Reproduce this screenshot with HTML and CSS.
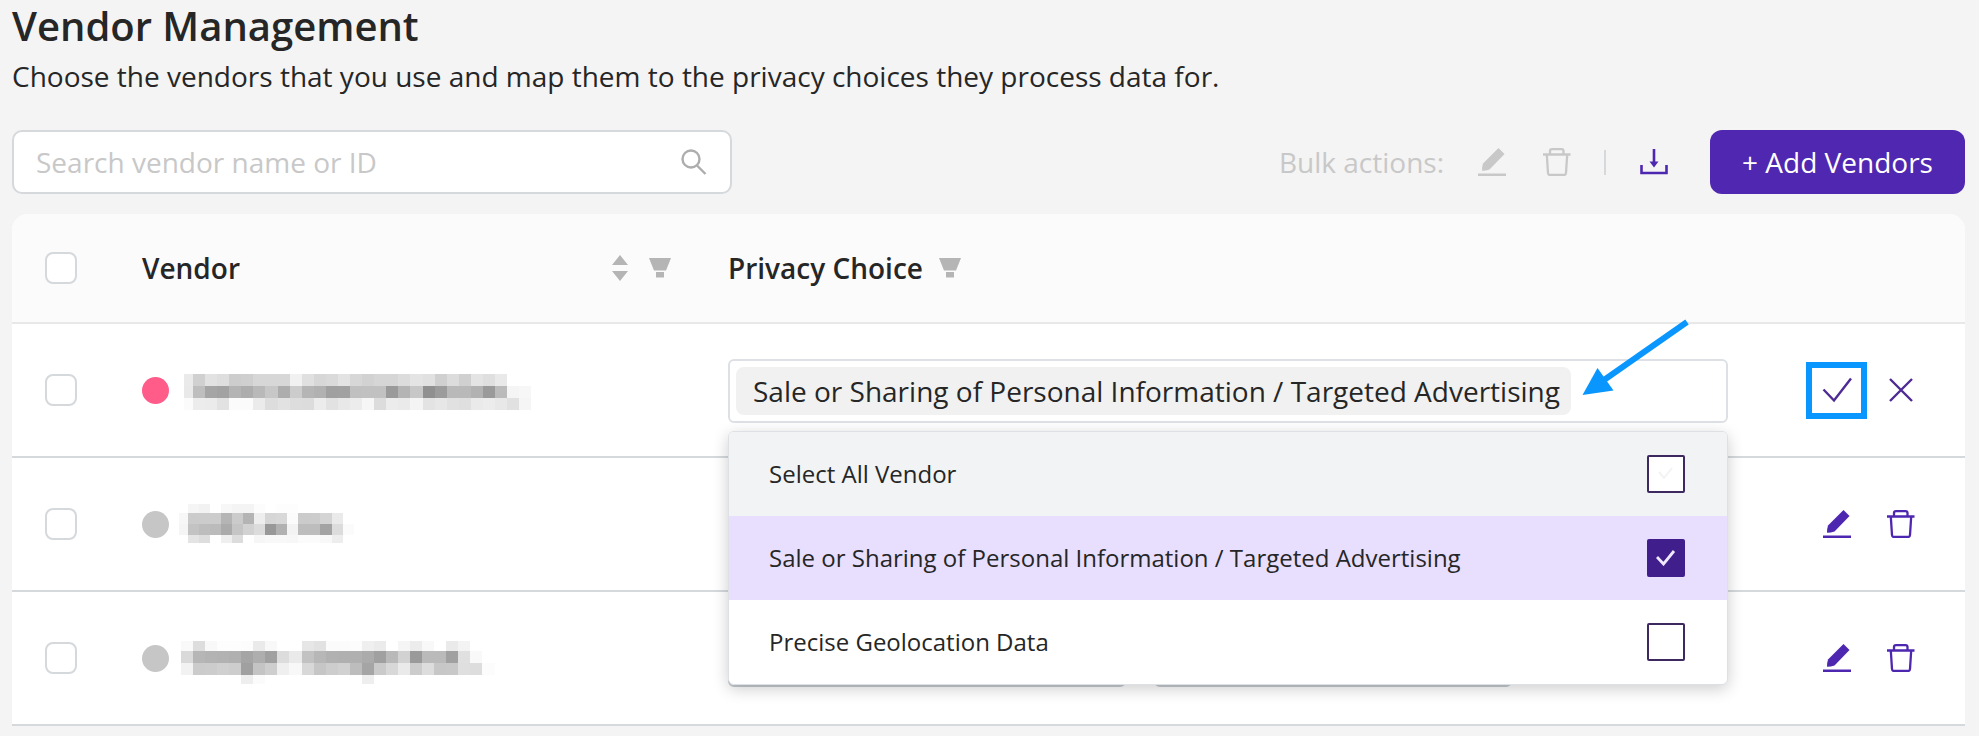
FILE: index.html
```html
<!DOCTYPE html>
<html lang="en">
<head>
    <meta charset="UTF-8">
    <meta name="viewport" content="width=device-width, initial-scale=1.0">
    <title>Vendor Management</title>
    <link rel="stylesheet" href="styles.css">
</head>
<body>
    <!-- shared icons -->
    <svg class="sprite">
        <symbol id="pencil" viewBox="0 0 28 28">
            <path d="M20.5 0 L26.500 6 L11.500 21.500 Q8 22.800 4 22.800 Q4 18.500 5 15.500 Z" fill="currentColor"/>
            <path d="M0 26.800 H28" stroke="currentColor" stroke-width="2.600"/>
        </symbol>
        <symbol id="trash" viewBox="0 0 28 28">
            <path d="M0 6.500 H27.500 M7 6.500 V3 Q7 1.200 9 1.200 H18.500 Q20.500 1.200 20.500 3 V6.500 M3.800 6.500 L5 25 Q5.200 27 7 27 H21 Q22.800 27 23 25 L24.200 6.500" fill="none" stroke="currentColor" stroke-width="2.300"/>
        </symbol>
        <symbol id="filter" viewBox="0 0 22 20">
            <path d="M0 0 H22 L17 12.500 H5 Z M7 14 H15 V19.500 H7 Z" fill="currentColor"/>
        </symbol>
    </svg>

    <main class="page">
        <h1 class="title">Vendor Management</h1>
        <p class="subtitle">Choose the vendors that you use and map them to the privacy choices they process data for.</p>

        <div class="toolbar">
            <div class="search">
                <input class="search-input" type="text" placeholder="Search vendor name or ID">
                <svg class="search-icon" width="26" height="26" viewBox="0 0 26 26"><circle cx="10" cy="10" r="8.500"/><path d="M16 16.500 L24.500 25"/></svg>
            </div>
            <div class="bulk">
                <span class="bulk-label">Bulk actions:</span>
                <svg class="icon icon-edit"><use href="#pencil"/></svg>
                <svg class="icon icon-delete"><use href="#trash"/></svg>
                <span class="divider"></span>
                <svg class="icon-download" width="28" height="26" viewBox="0 0 28 26"><path d="M14 0 V14 M1.500 16 V24 H26.500 V16" fill="none" stroke="currentColor" stroke-width="2.600"/><path d="M9.500 12.500 H18.500 L14 18.500 Z" fill="currentColor"/></svg>
            </div>
            <button class="add-btn">+ Add Vendors</button>
        </div>

        <div class="table">
            <div class="row head">
                <span class="check"></span>
                <div class="vendor">
                    <span>Vendor</span>
                    <svg class="sort" width="16" height="26" viewBox="0 0 16 26"><path d="M8 0 L16 10 H0 Z M0 16 H16 L8 26 Z"/></svg>
                    <svg class="filter"><use href="#filter"/></svg>
                </div>
                <div class="choice">
                    <span>Privacy Choice</span>
                    <svg class="filter"><use href="#filter"/></svg>
                </div>
            </div>

            <div class="row">
                <span class="check"></span>
                <div class="vendor"><span class="dot active"></span><svg class="masked" data-name="0"></svg></div>
                <div class="choice">
                    <div class="select">
                        <span class="tag">Sale or Sharing of Personal Information / Targeted Advertising</span>
                        <div class="dropdown">
                            <div class="option all"><span>Select All Vendor</span><span class="box"><svg class="tick" viewBox="0 0 20 16"><path d="M3 6 L8 12 L16 2"/></svg></span></div>
                            <div class="option selected"><span>Sale or Sharing of Personal Information / Targeted Advertising</span><span class="box"><svg class="tick" viewBox="0 0 20 16"><path d="M1 7 L7.500 14 L18 1"/></svg></span></div>
                            <div class="option"><span>Precise Geolocation Data</span><span class="box"></span></div>
                        </div>
                    </div>
                </div>
                <div class="actions editing">
                    <span class="highlight"><svg width="30" height="26" viewBox="0 0 30 26"><path d="M1.500 12.500 L12 23.500 L29 1.500"/></svg></span>
                    <svg class="close" width="24" height="24" viewBox="0 0 24 24"><path d="M1 1 L23 23 M23 1 L1 23"/></svg>
                </div>
            </div>

            <div class="row">
                <span class="check"></span>
                <div class="vendor"><span class="dot"></span><svg class="masked" data-name="1"></svg></div>
                <div class="choice"></div>
                <div class="actions">
                    <svg class="icon"><use href="#pencil"/></svg>
                    <svg class="icon"><use href="#trash"/></svg>
                </div>
            </div>

            <div class="row">
                <span class="check"></span>
                <div class="vendor"><span class="dot"></span><svg class="masked" data-name="2"></svg></div>
                <div class="choice"><span class="pill pill-wide"></span><span class="pill"></span></div>
                <div class="actions">
                    <svg class="icon"><use href="#pencil"/></svg>
                    <svg class="icon"><use href="#trash"/></svg>
                </div>
            </div>
        </div>
    </main>

    <svg class="arrow" width="110" height="80" viewBox="0 0 110 80"><path class="arrow-line" d="M105 3 L22 61"/><path class="arrow-head" d="M0.500 76 L15.500 49 L31.500 71.500 Z"/></svg>

    <script>
        // masked vendor names: x = left offset, w = cell width, ys = row edges, rows = grey levels
        const names = [
            { x: 4, first: 9, w: 12.08, ys: [0, 12, 24, 36], rows: [
                'ea d0 e2 de cd cf d7 d7 d7 f1 e0 d7 da e3 d7 d2 d6 d6 dc e4 e1 d0 dc d0 e4 df e9',
                'e9 be a5 a2 b4 ad b9 c7 ad cc b5 b1 a0 a1 c0 c1 c1 9a b4 c7 90 9c b9 b9 b2 9a bb f5 f7',
                'fb ec eb e2 fb fb eb dd e2 dd dc ec e2 e8 ec f6 dc ec ea f4 e3 e7 e1 df ea ec e8 e1 f5'] },
            { x: -1, first: 9, w: 11.04, ys: [-4, 5, 16, 27, 35], rows: [
                'ff f5 f2 ff f7 f4 f4 fc ff fd fd',
                'f7 cb cc cc b5 cb b4 ee d6 d8 fb cb cc d4 ea',
                'f5 c3 bd bb ab c5 d2 dc 98 b1 f3 bd bd a3 dc fb',
                'ff e4 dd ff ef dc ff f6 f8 f8 f7 fb fb f8 ed'] },
            { x: 1, first: 12, w: 12.06, ys: [-1, 9, 21, 33, 42], rows: [
                'f9 dd f8 fd fd fc ea f8 ff ff e6 e2 fb fb fc ef eb ff f5 ec f8 ff ea f3',
                'd9 b6 b3 b2 b0 a5 ae a0 dc ea c2 b7 b1 b0 b0 ab a0 b9 d2 9a ba ba a0 e0 f9',
                'f2 cb cc d0 cd a0 c4 ce ef f8 d8 c6 cd d1 bd a5 ca d8 ea cc dd c7 c8 df dd fc',
                'ff ff ff ff ff ee fb ff ff ff ff ff ff ff ff ee'] }
        ];

        document.querySelectorAll('.masked').forEach(svg => {
            const n = names[svg.dataset.name];
            n.rows.forEach((row, r) => {
                row.split(' ').forEach((c, i) => {
                    const rect = document.createElementNS('http://www.w3.org/2000/svg', 'rect');
                    rect.setAttribute('x', i ? n.x + n.first + (i - 1) * n.w : n.x);
                    rect.setAttribute('y', n.ys[r] + 6);
                    rect.setAttribute('width', i ? n.w : n.first);
                    rect.setAttribute('height', n.ys[r + 1] - n.ys[r]);
                    rect.setAttribute('fill', '#' + c + c + c);
                    svg.appendChild(rect);
                });
            });
        });
    </script>
</body>
</html>
```
FILE: styles.css
```css
*{padding:0; margin:0; box-sizing:border-box;}

body{
    height:736px;
    overflow:hidden;
    background:#f4f4f4;
    color:#262626;
    font-family:"Open Sans", sans-serif;
    font-size:28px;
}
svg{display:block; flex:none;}
.sprite{position:absolute; width:0; height:0;}

.page{padding:0 14px 0 12px;}
.title{
    font-size:40px;
    font-weight:600;
    line-height:52px;
}
.subtitle{
    height:78px;
    line-height:48px;
}

/* toolbar */
.toolbar{
    display:flex;
    align-items:center;
    height:64px;
    margin-bottom:20px;
}
.search{
    display:flex;
    align-items:center;
    width:720px;
    height:64px;
    padding:0 23px 0 22px;
    background:#fff;
    border:2px solid #d5d9dc;
    border-radius:10px;
}
.search-input{
    flex:1;
    border:0;
    outline:0;
    background:none;
    font:inherit;
    line-height:38px;
}
.search-input::placeholder{color:#c8c8c8;}
.search-icon{fill:none; stroke:#adadad; stroke-width:2.4;}
.bulk{
    display:flex;
    align-items:center;
    margin-left:auto;
    color:#c8c8c8;
}
.bulk-label{margin-right:34px;}
.icon{width:28px; height:28px; overflow:visible;}
.bulk .icon-delete{margin-left:37px;}
.divider{width:2px; height:25px; margin:0 34px 0 33px; background:#d5d9dc;}
.icon-download{color:#4e27b0; margin-right:42px;}
.add-btn{
    width:255px;
    height:64px;
    border:0;
    border-radius:12px;
    background:#5027b0;
    color:#fff;
    font:inherit;
}

/* table */
.table{background:#fff; border-radius:16px 16px 0 0;}
.row{
    display:flex;
    align-items:center;
    height:134px;
    padding-left:33px;
    border-bottom:2px solid #d5d9dc;
}
.row.head{
    height:110px;
    background:#fbfbfb;
    border-bottom-color:#e8e8e8;
    border-radius:16px 16px 0 0;
    font-weight:600;
}
.check{
    width:32px;
    height:32px;
    background:#fff;
    border:2px solid #d5d9dc;
    border-radius:8px;
}
.vendor{
    display:flex;
    align-items:center;
    width:651px;
    padding-left:65px;
}
.dot{width:27px; height:27px; border-radius:50%; background:#c6c6c6;}
.dot.active{background:#ff5c8a;}
.masked{
    width:360px;
    height:44px;
    margin-left:11px;
    overflow:visible;
    shape-rendering:crispEdges;
}
.sort{margin-left:auto; fill:#b5b5b5;}
.filter{width:22px; height:20px; color:#b5b5b5;}
.vendor .filter{margin:0 57px 0 21px;}
.choice{
    display:flex;
    align-items:center;
    width:1000px;
}
.choice .filter{margin-left:16px;}
.pill{width:358px; height:58px; border:2px solid #c5cbd0; border-radius:6px;}
.pill-wide{width:398px; margin-right:28px;}

.select{
    position:relative;
    display:flex;
    align-items:center;
    width:1000px;
    height:64px;
    margin-top:2px;
    padding:0 6px;
    border:2px solid #dde1e5;
    border-radius:6px;
}
.tag{
    width:835px;
    height:48px;
    padding-left:17px;
    border-radius:8px;
    background:#f1f1f1;
    line-height:48px;
    white-space:nowrap;
}
.dropdown{
    position:absolute;
    z-index:1;
    top:70px;
    left:-2px;
    width:1000px;
    border:1px solid #dde1e5;
    border-radius:6px;
    background:#fff;
    box-shadow:0 4px 16px rgba(0,0,0,.2);
    overflow:hidden;
    font-size:24px;
}
.option{
    display:flex;
    align-items:center;
    justify-content:space-between;
    height:84px;
    padding:0 42px 0 40px;
}
.option > span:first-child{margin-top:-2px;}
.option.all{background:#f2f3f5;}
.option.selected{background:#e8dfff;}
.box{
    display:flex;
    align-items:center;
    justify-content:center;
    width:38px;
    height:38px;
    border:2px solid #3d2860;
    border-radius:2px;
    background:#fff;
}
.tick{width:20px; height:16px; fill:none; stroke:#f3f3f3; stroke-width:2;}
.selected .box{background:#401f8c; border-color:#401f8c;}
.selected .tick{stroke:#f0e8ff; stroke-width:2.8;}

.actions{
    display:flex;
    align-items:center;
    gap:36px;
    margin-left:95px;
    color:#4e27b0;
}
.actions.editing{
    gap:23px;
    margin-left:78px;
    fill:none;
    stroke:#4e2a94;
    stroke-width:2.4;
}
.highlight{
    display:flex;
    align-items:center;
    justify-content:center;
    width:61px;
    height:57px;
    border:6px solid #0a96ff;
}
.close{margin-left:-1px;}

/* pointer drawn over the table */
.arrow{position:absolute; left:1582px; top:319px;}
.arrow-line{stroke:#0a96ff; stroke-width:6;}
.arrow-head{fill:#0a96ff;}
```
